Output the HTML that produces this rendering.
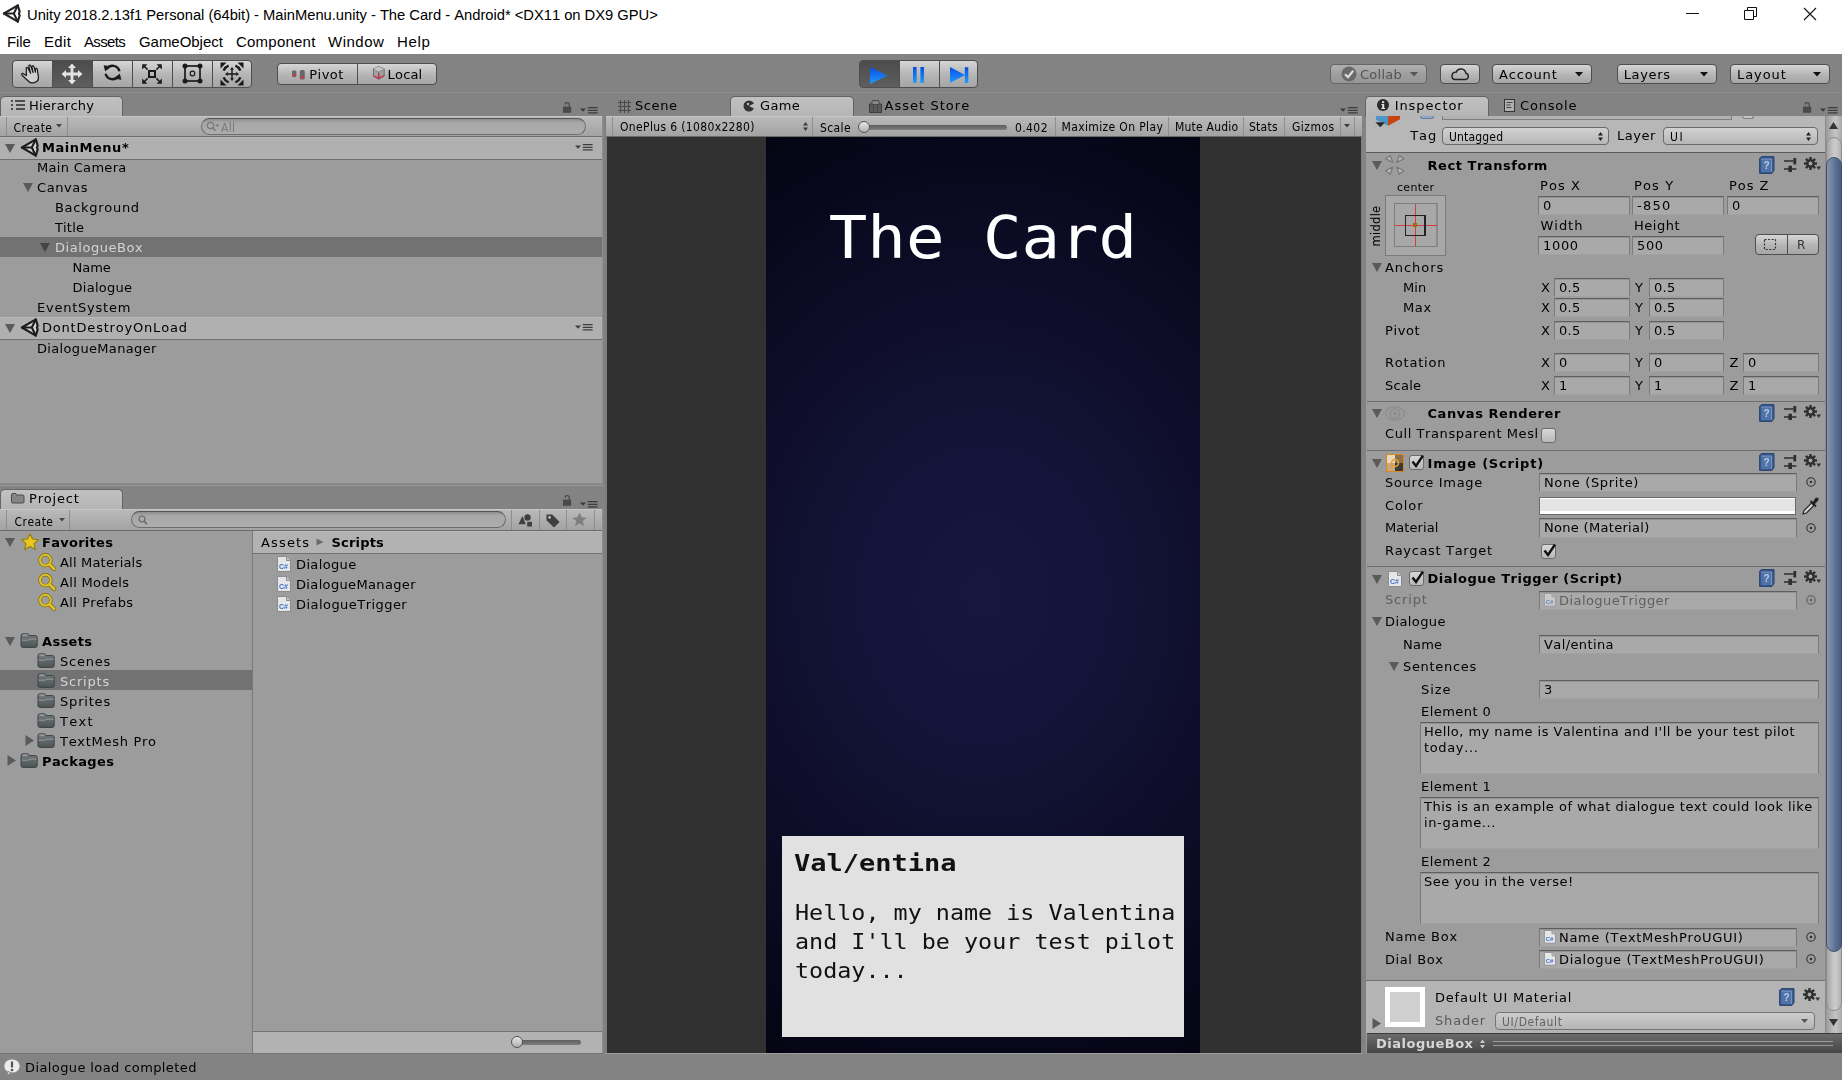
<!DOCTYPE html>
<html><head><meta charset="utf-8"><title>Unity</title>
<style>
*{box-sizing:border-box;margin:0;padding:0}
html,body{width:1842px;height:1080px;overflow:hidden;background:#838383}
body{font-family:"DejaVu Sans","Liberation Sans",sans-serif;font-size:13px;letter-spacing:.28px;font-kerning:none;color:#000;position:relative}
.a{position:absolute}
.t{position:absolute;white-space:nowrap;line-height:20px;height:20px}
.b{font-weight:bold}
.w{font-family:"Liberation Sans",sans-serif;letter-spacing:0}
.btn{position:absolute;border:1px solid #4e4e4e;background:linear-gradient(#d6d6d6,#b4b4b4 55%,#a6a6a6);}
.btn.on{background:linear-gradient(#4c4c4c,#5e5e5e);}
.tab{position:absolute;height:21.5px;border:1px solid #646464;border-bottom:none;border-radius:5px 5px 0 0;background:linear-gradient(#c1c1c1,#b4b4b4)}
.pbar{position:absolute;background:linear-gradient(#bababa,#a3a3a3);border-bottom:1px solid #6c6c6c;box-shadow:inset 0 1px 0 #c6c6c6}
.panel{position:absolute;background:#9c9c9c}
.f{position:absolute;background:#a9a9a9;border:1px solid #7a7a7a;border-top-color:#5e5e5e;border-bottom-color:#a2a2a2;box-shadow:inset 0 1px 0 #939393;line-height:17px;font-size:13px;padding-left:4px;white-space:nowrap;overflow:hidden}
.sep{position:absolute;height:1px;background:#6e6e6e}
.g{color:#4a4a4a}
.s12{font-size:12px;font-family:"DejaVu Sans Condensed","DejaVu Sans",sans-serif}
.mono{font-family:"DejaVu Sans Mono","Liberation Mono",monospace;letter-spacing:0}
.dd{position:absolute;border:1px solid #6a6a6a;border-radius:4px;background:linear-gradient(#d2d2d2,#b6b6b6);font-size:12px;font-family:"DejaVu Sans Condensed","DejaVu Sans",sans-serif;line-height:17px;padding:1px 0 0 6px;white-space:nowrap}
svg{position:absolute;overflow:visible}
</style></head>
<body>
<div class="a" style="left:0px;top:0px;width:1842px;height:54px;background:#fff"></div>
<svg style="left:0px;top:0px;" width="24" height="26" viewBox="0 0 24 26"><g fill="none" stroke="#222" stroke-width="2.1" stroke-linejoin="round" stroke-linecap="round"><path d="M3.9 13.5 L17.8 5.4 L19.7 11.6 L18.9 13.5 L19.7 15.4 L17.8 21.6 Z" fill="none"/><path d="M13.8 13.5 L3.9 13.5 M13.8 13.5 L17.8 5.4 M13.8 13.5 L17.8 21.6"/></g></svg>
<div class="t w" style="left:27px;top:4.6px;font-size:14.75px;letter-spacing:-0.024px;">Unity 2018.2.13f1 Personal (64bit) - MainMenu.unity - The Card - Android* &lt;DX11 on DX9 GPU&gt;</div>
<svg style="left:1686px;top:13px;" width="13" height="1" viewBox="0 0 13 1"><rect width="13" height="1" fill="#111"/></svg>
<svg style="left:1744px;top:7px;" width="14" height="14" viewBox="0 0 14 14"><path d="M0.5 3.5H9.5V12.5H0.5Z M3.5 3.5V0.5H12.5V9.5H9.5" fill="none" stroke="#111" stroke-width="1"/></svg>
<svg style="left:1804px;top:8px;" width="12" height="12" viewBox="0 0 12 12"><path d="M0 0L12 12M12 0L0 12" stroke="#111" stroke-width="1.1"/></svg>
<div class="t w" style="left:7px;top:31.6px;font-size:15px;letter-spacing:-0.123px;">File</div>
<div class="t w" style="left:44px;top:31.6px;font-size:15px;letter-spacing:0.318px;">Edit</div>
<div class="t w" style="left:84px;top:31.6px;font-size:15px;letter-spacing:-0.643px;">Assets</div>
<div class="t w" style="left:139px;top:31.6px;font-size:15px;letter-spacing:-0.044px;">GameObject</div>
<div class="t w" style="left:236px;top:31.6px;font-size:15px;letter-spacing:0.219px;">Component</div>
<div class="t w" style="left:328px;top:31.6px;font-size:15px;letter-spacing:0.490px;">Window</div>
<div class="t w" style="left:397px;top:31.6px;font-size:15px;letter-spacing:0.650px;">Help</div>
<div class="a" style="left:0;top:0;width:1842px;height:1080px;will-change:transform">
<div class="a" style="left:0px;top:54px;width:1842px;height:39px;background:#838383"></div>
<div class="a" style="left:0px;top:92px;width:1842px;height:1px;background:#8e8e8e"></div>
<div class="btn" style="left:12px;top:60px;width:41px;height:28px;border-radius:4px 0 0 4px"></div>
<div class="btn on" style="left:52px;top:60px;width:41px;height:28px;border-radius:0"></div>
<div class="btn" style="left:92px;top:60px;width:41px;height:28px;border-radius:0"></div>
<div class="btn" style="left:132px;top:60px;width:41px;height:28px;border-radius:0"></div>
<div class="btn" style="left:172px;top:60px;width:41px;height:28px;border-radius:0"></div>
<div class="btn" style="left:212px;top:60px;width:40px;height:28px;border-radius:0 4px 4px 0"></div>
<svg style="left:20px;top:63px;" width="22" height="22" viewBox="0 0 22 22"><g transform="rotate(-14 11 11)"><path d="M6.2 11.4 L3.6 8.8 C2.4 7.8 1.2 9.2 2.2 10.4 L6.8 17.4 C8 19.4 9.6 20.2 12 20.2 C15.6 20.2 17.4 18 17.6 14.8 L18.2 7.8 C18.2 6.4 16.4 6.4 16.2 7.8 L15.8 10.4 L15.6 4.6 C15.5 3.2 13.7 3.2 13.6 4.6 L13.4 10 L12.7 3 C12.5 1.6 10.7 1.8 10.7 3.2 L10.8 10.2 L9.4 4.4 C9 3.1 7.3 3.6 7.6 5 Z" fill="#cfcfcf" stroke="#1a1a1a" stroke-width="1.2" stroke-linejoin="round"/></g></svg>
<svg style="left:61px;top:62.5px;" width="22" height="22" viewBox="0 0 22 22"><path d="M11 0.5 L15 5 H12.4 V9.6 H17 V7 L21.5 11 L17 15 V12.4 H12.4 V17 H15 L11 21.5 L7 17 H9.6 V12.4 H5 V15 L0.5 11 L5 7 V9.6 H9.6 V5 H7 Z" fill="#e4e4e4"/></svg>
<svg style="left:103px;top:63px;" width="19" height="19" viewBox="0 0 19 19"><g fill="none" stroke="#1a1a1a" stroke-width="2.4"><path d="M3.6 6.2 A7 7 0 0 1 16.4 8.2"/><path d="M15.4 12.8 A7 7 0 0 1 2.6 10.8"/></g><path d="M0.6 2.2 L7.4 3.2 L2.2 8.6 Z M18.4 16.8 L11.6 15.8 L16.8 10.4 Z" fill="#1a1a1a"/></svg>
<svg style="left:142px;top:64px;" width="20" height="20" viewBox="0 0 20 20"><rect x="7" y="7" width="6" height="6" fill="none" stroke="#1a1a1a" stroke-width="2"/><g stroke="#1a1a1a" stroke-width="1.5"><path d="M5.6 5.6L2 2M14.4 5.6L18 2M5.6 14.4L2 18M14.4 14.4L18 18"/></g><path d="M0.2 0.2H5.4L0.2 5.4Z M19.8 0.2H14.6L19.8 5.4Z M0.2 19.8H5.4L0.2 14.6Z M19.8 19.8H14.6L19.8 14.6Z" fill="#1a1a1a"/></svg>
<svg style="left:181.5px;top:63px;" width="21" height="21" viewBox="0 0 21 21"><rect x="3" y="3" width="15" height="15" fill="none" stroke="#1a1a1a" stroke-width="1.7"/><circle cx="10.5" cy="10.5" r="2.3" fill="none" stroke="#1a1a1a" stroke-width="1.2"/><g fill="#1a1a1a"><circle cx="3" cy="3" r="2.5"/><circle cx="18" cy="3" r="2.5"/><circle cx="3" cy="18" r="2.5"/><circle cx="18" cy="18" r="2.5"/></g></svg>
<svg style="left:220px;top:62px;" width="24" height="24" viewBox="0 0 24 24"><g fill="none" stroke="#1a1a1a" stroke-width="2.4"><path d="M3.6 8.6A9 9 0 0 1 8.6 3.6M15.4 3.6A9 9 0 0 1 20.4 8.6M20.4 15.4A9 9 0 0 1 15.4 20.4M8.6 20.4A9 9 0 0 1 3.6 15.4"/></g><g stroke="#1a1a1a" stroke-width="1.4"><path d="M12 7V17M7 12H17"/></g><path d="M0.5 0.5H6.5L0.5 6.5Z M23.5 0.5H17.5L23.5 6.5Z M0.5 23.5H6.5L0.5 17.5Z M23.5 23.5H17.5L23.5 17.5Z" fill="#1a1a1a"/><path d="M12 5L14 7.8H10Z M12 19L14 16.2H10Z M5 12L7.8 10V14Z M19 12L16.2 10V14Z" fill="#1a1a1a"/></svg>
<div class="btn" style="left:277px;top:63px;width:81px;height:22px;border-radius:4px 0 0 4px"></div>
<div class="btn" style="left:357px;top:63px;width:80px;height:22px;border-radius:0 4px 4px 0"></div>
<svg style="left:292px;top:69.5px;" width="13" height="10" viewBox="0 0 13 10"><rect x="0" y="0.6" width="4.4" height="6.6" rx="1.4" fill="#676767"/><rect x="7.8" y="0" width="5" height="9.6" rx="1.6" fill="#676767"/><circle cx="2.2" cy="5.4" r="1.3" fill="#d8364a"/><circle cx="10.3" cy="7.4" r="1.5" fill="#d8364a"/></svg>
<div class="t " style="left:309.3px;top:64.6px;letter-spacing:0.476px;">Pivot</div>
<svg style="left:373px;top:65.8px;" width="12" height="14" viewBox="0 0 12 14"><path d="M5.7 0.4L11.2 3V10.2L5.7 13.2L0.4 10.2V3Z" fill="#a2a2a2" stroke="#6a6a6a" stroke-width="0.9"/><path d="M0.4 3L5.7 5.8L11.2 3M5.7 5.8V13.2" fill="none" stroke="#6a6a6a" stroke-width="0.9"/><path d="M5.7 0.4L11.2 3L5.7 5.8L0.4 3Z" fill="#c4c4c4"/><path d="M0.6 9L5.7 11.4L11 9V10.2L5.7 13.2L0.6 10.2Z" fill="#c4364a"/><path d="M5 7H6.4V12H5Z" fill="#c4364a"/></svg>
<div class="t " style="left:387.6px;top:64.6px;letter-spacing:0.170px;">Local</div>
<div class="btn on" style="left:859px;top:60px;width:41px;height:28px;border-radius:4px 0 0 4px"></div>
<div class="btn" style="left:899px;top:60px;width:41px;height:28px;"></div>
<div class="btn" style="left:939px;top:60px;width:39px;height:28px;border-radius:0 4px 4px 0"></div>
<svg width="0" height="0" style="left:0;top:0"><defs><linearGradient id="bl" x1="0" y1="0" x2="0" y2="1"><stop offset="0" stop-color="#0a4ee0"/><stop offset="1" stop-color="#1f9bff"/></linearGradient></defs></svg>
<svg style="left:869.8px;top:66.5px;" width="18" height="17" viewBox="0 0 18 17"><path d="M0 0V17L17.6 8.6Z" fill="url(#bl)"/></svg>
<svg style="left:913.4px;top:67.2px;" width="11" height="16" viewBox="0 0 11 16"><rect x="0" y="0" width="3.6" height="15.8" fill="url(#bl)"/><rect x="7.4" y="0" width="3.6" height="15.8" fill="url(#bl)"/></svg>
<svg style="left:950px;top:67px;" width="19" height="16" viewBox="0 0 19 16"><path d="M0 0V16L15 8Z" fill="url(#bl)"/><rect x="14.8" y="0.2" width="3.5" height="15.8" fill="url(#bl)"/></svg>
<div class="btn" style="left:1330px;top:64px;width:97px;height:20px;border-radius:4px;opacity:.55;"></div>
<div class="t " style="left:1360px;top:64.6px;color:#555;letter-spacing:0.265px;">Collab</div>
<svg style="left:1410px;top:72px;" width="8" height="5" viewBox="0 0 8 5"><path d="M0 0H8L4 4.5Z" fill="#555"/></svg>
<svg style="left:1341px;top:66px;" width="16" height="16" viewBox="0 0 16 16"><circle cx="8" cy="8" r="7.5" fill="#6a6a6a"/><path d="M4 8.2L7 11.2L12.2 4.8" fill="none" stroke="#ddd" stroke-width="2.2"/></svg>
<div class="btn" style="left:1440px;top:64px;width:40px;height:20px;border-radius:4px;"></div>
<svg style="left:1450px;top:67px;" width="20" height="14" viewBox="0 0 20 14"><path d="M5 12.5H15.5A3.2 3.2 0 0 0 15.8 6.2A5 5 0 0 0 6.2 5.2A3.7 3.7 0 0 0 5 12.5Z" fill="none" stroke="#222" stroke-width="1.4"/></svg>
<div class="btn" style="left:1492px;top:64px;width:100px;height:20px;border-radius:4px;"></div>
<div class="t " style="left:1499px;top:64.6px;letter-spacing:0.847px;">Account</div>
<svg style="left:1575px;top:72px;" width="8" height="5" viewBox="0 0 8 5"><path d="M0 0H8L4 4.5Z" fill="#111"/></svg>
<div class="btn" style="left:1617px;top:64px;width:100px;height:20px;border-radius:4px;"></div>
<div class="t " style="left:1623.7px;top:64.6px;letter-spacing:0.676px;">Layers</div>
<svg style="left:1700px;top:72px;" width="8" height="5" viewBox="0 0 8 5"><path d="M0 0H8L4 4.5Z" fill="#111"/></svg>
<div class="btn" style="left:1730px;top:64px;width:100px;height:20px;border-radius:4px;"></div>
<div class="t " style="left:1737px;top:64.6px;letter-spacing:0.922px;">Layout</div>
<svg style="left:1813px;top:72px;" width="8" height="5" viewBox="0 0 8 5"><path d="M0 0H8L4 4.5Z" fill="#111"/></svg>
<div class="tab" style="left:0;top:95.5px;width:123px"></div>
<svg style="left:11px;top:100px;" width="15" height="11" viewBox="0 0 15 11"><path d="M0 1H2M0 5H2M0 9H2M4 1H14M5 5H14M5 9H14" stroke="#2a2a2a" stroke-width="1.6"/></svg>
<div class="t " style="left:29px;top:96.2px;letter-spacing:0.235px;">Hierarchy</div>
<svg style="left:563px;top:102px;" width="10" height="11" viewBox="0 0 10 11"><path d="M6.2 5V3A2.1 2.1 0 0 0 2 2.6" fill="none" stroke="#4a4a4a" stroke-width="1.2"/><rect x="0" y="4.6" width="8.2" height="6.2" fill="#4a4a4a"/></svg>
<svg style="left:580.3px;top:107.4px;" width="18" height="8" viewBox="0 0 18 8"><path d="M0 1.4H6L3 4.8Z" fill="#3c3c3c"/><path d="M7.8 0.7H17.6M7.8 3.3H17.6M7.8 5.9H17.6" stroke="#3c3c3c" stroke-width="1.3"/></svg>
<div class="panel" style="left:0px;top:116px;width:603px;height:368px;border-right:1px solid #8e8e8e;border-bottom:1px solid #8e8e8e"></div>
<div class="a" style="left:0px;top:485px;width:604px;height:1px;background:#999"></div>
<div class="pbar" style="left:0px;top:116px;width:602px;height:21px;"></div>
<div class="a" style="left:6px;top:117px;width:1px;height:19px;background:#8e8e8e"></div>
<div class="a" style="left:67px;top:117px;width:1px;height:19px;background:#8e8e8e"></div>
<div class="t s12" style="left:13.5px;top:117.6px;letter-spacing:0.478px;">Create</div>
<svg style="left:56.4px;top:123.6px;" width="6" height="3.4" viewBox="0 0 6 3.4"><path d="M0 0H6L3 3.4Z" fill="#444"/></svg>
<div class="a" style="left:201px;top:117.5px;width:385px;height:17px;border:1px solid #6e6e6e;border-top-color:#555;border-radius:8.5px;background:linear-gradient(#8e8e8e,#a8a8a8 25%,#adadad);"></div>
<svg style="left:206px;top:121px;" width="14" height="11" viewBox="0 0 14 11"><circle cx="4.5" cy="4.5" r="3.2" fill="none" stroke="#777" stroke-width="1.2"/><path d="M6.8 6.8L9.5 9.8" stroke="#777" stroke-width="1.4"/><path d="M9 3.5H13.5L11.2 6Z" fill="#777"/></svg>
<div class="t s12" style="left:221px;top:118.1px;color:#7a7a7a">All</div>
<div class="a" style="left:0px;top:137px;width:602px;height:23px;background:#b0b0b0;border-bottom:1px solid #707070;border-top:1px solid #b8b8b8"></div>
<svg style="left:5px;top:143.5px;" width="10" height="9" viewBox="0 0 10 9"><path d="M0 0H10L5 9Z" fill="#5a5a5a"/></svg>
<svg style="left:18.4px;top:134.4px;" width="24" height="26" viewBox="0 0 24 26"><g fill="none" stroke="#1c1c1c" stroke-width="2.1" stroke-linejoin="round" stroke-linecap="round"><path d="M3.9 13.5 L17.8 5.4 L19.7 11.6 L18.9 13.5 L19.7 15.4 L17.8 21.6 Z" fill="#d2d2d2"/><path d="M13.8 13.5 L3.9 13.5 M13.8 13.5 L17.8 5.4 M13.8 13.5 L17.8 21.6"/></g></svg>
<div class="t b" style="left:42px;top:138.1px;letter-spacing:0.527px;">MainMenu*</div>
<svg style="left:575px;top:144px;" width="18" height="8" viewBox="0 0 18 8"><path d="M0 1.4H6L3 4.8Z" fill="#3c3c3c"/><path d="M7.8 0.7H17.6M7.8 3.3H17.6M7.8 5.9H17.6" stroke="#3c3c3c" stroke-width="1.3"/></svg>
<div class="t " style="left:37px;top:158.1px;letter-spacing:0.312px;">Main Camera</div>
<svg style="left:23px;top:183.0px;" width="10" height="9" viewBox="0 0 10 9"><path d="M0 0H10L5 9Z" fill="#5a5a5a"/></svg>
<div class="t " style="left:37px;top:178.1px;letter-spacing:0.577px;">Canvas</div>
<div class="t " style="left:55px;top:198.1px;letter-spacing:0.695px;">Background</div>
<div class="t " style="left:55px;top:218.1px;letter-spacing:0.160px;">Title</div>
<div class="a" style="left:0px;top:237px;width:602px;height:20px;background:#727272"></div>
<svg style="left:40px;top:243.0px;" width="10" height="9" viewBox="0 0 10 9"><path d="M0 0H10L5 9Z" fill="#444"/></svg>
<div class="t " style="left:55px;top:238.1px;color:#d4d4d4;letter-spacing:0.559px;">DialogueBox</div>
<div class="t " style="left:72.5px;top:258.1px;letter-spacing:-0.018px;">Name</div>
<div class="t " style="left:72.5px;top:278.1px;letter-spacing:0.280px;">Dialogue</div>
<div class="t " style="left:37px;top:298.1px;letter-spacing:0.768px;">EventSystem</div>
<div class="a" style="left:0px;top:317px;width:602px;height:23px;background:#b0b0b0;border-bottom:1px solid #707070;border-top:1px solid #b8b8b8"></div>
<svg style="left:5px;top:323.5px;" width="10" height="9" viewBox="0 0 10 9"><path d="M0 0H10L5 9Z" fill="#5a5a5a"/></svg>
<svg style="left:18.4px;top:314.4px;" width="24" height="26" viewBox="0 0 24 26"><g fill="none" stroke="#1c1c1c" stroke-width="2.1" stroke-linejoin="round" stroke-linecap="round"><path d="M3.9 13.5 L17.8 5.4 L19.7 11.6 L18.9 13.5 L19.7 15.4 L17.8 21.6 Z" fill="#d2d2d2"/><path d="M13.8 13.5 L3.9 13.5 M13.8 13.5 L17.8 5.4 M13.8 13.5 L17.8 21.6"/></g></svg>
<div class="t " style="left:42px;top:318.1px;letter-spacing:0.803px;">DontDestroyOnLoad</div>
<svg style="left:575px;top:324px;" width="18" height="8" viewBox="0 0 18 8"><path d="M0 1.4H6L3 4.8Z" fill="#3c3c3c"/><path d="M7.8 0.7H17.6M7.8 3.3H17.6M7.8 5.9H17.6" stroke="#3c3c3c" stroke-width="1.3"/></svg>
<div class="t " style="left:37px;top:338.6px;letter-spacing:0.334px;">DialogueManager</div>
<div class="tab" style="left:0;top:488.5px;width:123px"></div>
<svg width="0" height="0" style="left:0;top:0"><defs><linearGradient id="fg" x1="0" y1="0" x2="0" y2="1"><stop offset="0" stop-color="#767c7e"/><stop offset="1" stop-color="#4b5355"/></linearGradient><linearGradient id="ft" x1="0" y1="0" x2="0" y2="1"><stop offset="0" stop-color="#b0b0b0"/><stop offset="1" stop-color="#7c8082"/></linearGradient></defs></svg>
<svg style="left:10.5px;top:493px;" width="14" height="11" viewBox="0 0 14 11"><path d="M0.5 1.8Q0.5 0.5 1.8 0.5H4.6L5.8 2H11.6Q13 2 13 3.3V8.8Q13 10 11.7 10H1.8Q0.5 10 0.5 8.8Z" fill="#858585" stroke="#4a4a4a"/></svg>
<div class="t " style="left:29px;top:489.2px;letter-spacing:0.818px;">Project</div>
<svg style="left:563px;top:495.4px;" width="10" height="11" viewBox="0 0 10 11"><path d="M6.2 5V3A2.1 2.1 0 0 0 2 2.6" fill="none" stroke="#4a4a4a" stroke-width="1.2"/><rect x="0" y="4.6" width="8.2" height="6.2" fill="#4a4a4a"/></svg>
<svg style="left:580.3px;top:500.79999999999995px;" width="18" height="8" viewBox="0 0 18 8"><path d="M0 1.4H6L3 4.8Z" fill="#3c3c3c"/><path d="M7.8 0.7H17.6M7.8 3.3H17.6M7.8 5.9H17.6" stroke="#3c3c3c" stroke-width="1.3"/></svg>
<div class="panel" style="left:0px;top:509px;width:603px;height:544px;border-right:1px solid #8e8e8e"></div>
<div class="pbar" style="left:0px;top:509px;width:602px;height:22px;"></div>
<div class="a" style="left:6px;top:510px;width:1px;height:20px;background:#8e8e8e"></div>
<div class="a" style="left:69px;top:510px;width:1px;height:20px;background:#8e8e8e"></div>
<div class="t s12" style="left:14.5px;top:511.6px;letter-spacing:0.478px;">Create</div>
<svg style="left:58.6px;top:517.6px;" width="6" height="3.4" viewBox="0 0 6 3.4"><path d="M0 0H6L3 3.4Z" fill="#444"/></svg>
<div class="a" style="left:131px;top:511.3px;width:375px;height:17px;border:1px solid #6e6e6e;border-top-color:#555;border-radius:8.5px;background:linear-gradient(#8e8e8e,#a8a8a8 25%,#adadad);"></div>
<svg style="left:138px;top:515px;" width="10" height="10" viewBox="0 0 10 10"><circle cx="4" cy="4" r="3" fill="none" stroke="#666" stroke-width="1.2"/><path d="M6.2 6.2L9 9.2" stroke="#666" stroke-width="1.5"/></svg>
<div class="a" style="left:511px;top:510px;width:1px;height:20px;background:#8e8e8e"></div>
<div class="a" style="left:539px;top:510px;width:1px;height:20px;background:#8e8e8e"></div>
<div class="a" style="left:566px;top:510px;width:1px;height:20px;background:#8e8e8e"></div>
<div class="a" style="left:594px;top:510px;width:1px;height:20px;background:#8e8e8e"></div>
<svg style="left:518px;top:513.5px;" width="15" height="13" viewBox="0 0 15 13"><circle cx="9.5" cy="3.5" r="3.2" fill="#404040"/><path d="M0.5 10.2L4.4 2L7.8 10.2Z" fill="#404040"/><rect x="9.2" y="7.8" width="4.8" height="4.8" fill="#404040"/></svg>
<svg style="left:545.5px;top:514px;" width="14" height="14" viewBox="0 0 14 14"><path d="M0.5 0.5H6.2L13.6 8L8 13.6L0.5 6.2Z" fill="#3e3e3e"/><circle cx="3.6" cy="3.4" r="1.3" fill="#c8c8c8"/></svg>
<svg style="left:572px;top:512px;" width="15" height="14" viewBox="0 0 15 14"><path d="M7.5 0.5L9.6 5.2L14.6 5.7L10.8 9.1L11.9 14L7.5 11.4L3.1 14L4.2 9.1L0.4 5.7L5.4 5.2Z" fill="#7e7e7e"/></svg>
<div class="a" style="left:252px;top:531px;width:1px;height:522px;background:#7a7a7a"></div>
<svg style="left:5px;top:537.5px;" width="10" height="9" viewBox="0 0 10 9"><path d="M0 0H10L5 9Z" fill="#5a5a5a"/></svg>
<svg style="left:21px;top:532.5px;" width="18" height="17" viewBox="0 0 18 17"><path d="M9 0.8L11.5 6L17.4 6.7L13 10.6L14.3 16.4L9 13.4L3.7 16.4L5 10.6L0.6 6.7L6.5 6Z" fill="#ebc622" stroke="#94800f" stroke-width="1.2" stroke-linejoin="round"/></svg>
<div class="t b" style="left:42px;top:532.6px;letter-spacing:0.276px;">Favorites</div>
<svg style="left:38px;top:552.6px;" width="18" height="18" viewBox="0 0 18 18"><circle cx="7.4" cy="7.2" r="5.4" fill="none" stroke="#7d6a12" stroke-width="3.4"/><path d="M11.6 11.4L16.2 16" stroke="#7d6a12" stroke-width="4.2" stroke-linecap="round"/><circle cx="7.4" cy="7.2" r="5.4" fill="none" stroke="#e2c326" stroke-width="2"/><path d="M11.8 11.6L16.2 16" stroke="#e2c326" stroke-width="2.6" stroke-linecap="round"/></svg>
<div class="t " style="left:60px;top:552.6px;letter-spacing:0.197px;">All Materials</div>
<svg style="left:38px;top:572.6px;" width="18" height="18" viewBox="0 0 18 18"><circle cx="7.4" cy="7.2" r="5.4" fill="none" stroke="#7d6a12" stroke-width="3.4"/><path d="M11.6 11.4L16.2 16" stroke="#7d6a12" stroke-width="4.2" stroke-linecap="round"/><circle cx="7.4" cy="7.2" r="5.4" fill="none" stroke="#e2c326" stroke-width="2"/><path d="M11.8 11.6L16.2 16" stroke="#e2c326" stroke-width="2.6" stroke-linecap="round"/></svg>
<div class="t " style="left:60px;top:572.6px;letter-spacing:0.327px;">All Models</div>
<svg style="left:38px;top:592.6px;" width="18" height="18" viewBox="0 0 18 18"><circle cx="7.4" cy="7.2" r="5.4" fill="none" stroke="#7d6a12" stroke-width="3.4"/><path d="M11.6 11.4L16.2 16" stroke="#7d6a12" stroke-width="4.2" stroke-linecap="round"/><circle cx="7.4" cy="7.2" r="5.4" fill="none" stroke="#e2c326" stroke-width="2"/><path d="M11.8 11.6L16.2 16" stroke="#e2c326" stroke-width="2.6" stroke-linecap="round"/></svg>
<div class="t " style="left:60px;top:592.6px;letter-spacing:0.410px;">All Prefabs</div>
<svg style="left:5px;top:636.5px;" width="10" height="9" viewBox="0 0 10 9"><path d="M0 0H10L5 9Z" fill="#5a5a5a"/></svg>
<svg style="left:20px;top:633px;" width="18" height="15" viewBox="0 0 18 15"><path d="M1 3Q1 0.8 3 0.8H7Q8.6 0.8 9 2.6H15.4Q17.2 2.6 17.2 4.4V12.6Q17.2 14.4 15.4 14.4H2.8Q1 14.4 1 12.6Z" fill="url(#fg)" stroke="#3d4345" stroke-width="1"/><path d="M2.2 2.8Q2.2 1.6 3.4 1.6H6.8Q7.8 1.6 8 3.2H2.2Z" fill="url(#ft)"/><path d="M1.6 7.2H8.2L9.2 6.2H16.6" fill="none" stroke="#9aa0a2" stroke-width="0.9"/></svg>
<div class="t b" style="left:42px;top:631.6px;letter-spacing:0.339px;">Assets</div>
<div class="t " style="left:60px;top:651.6px;letter-spacing:0.758px;">Scenes</div>
<svg style="left:36.8px;top:652.7px;" width="18" height="15" viewBox="0 0 18 15"><path d="M1 3Q1 0.8 3 0.8H7Q8.6 0.8 9 2.6H15.4Q17.2 2.6 17.2 4.4V12.6Q17.2 14.4 15.4 14.4H2.8Q1 14.4 1 12.6Z" fill="url(#fg)" stroke="#3d4345" stroke-width="1"/><path d="M2.2 2.8Q2.2 1.6 3.4 1.6H6.8Q7.8 1.6 8 3.2H2.2Z" fill="url(#ft)"/><path d="M1.6 7.2H8.2L9.2 6.2H16.6" fill="none" stroke="#9aa0a2" stroke-width="0.9"/></svg>
<div class="a" style="left:0px;top:670px;width:252px;height:20px;background:#727272"></div>
<div class="t " style="left:60px;top:671.6px;color:#d4d4d4;letter-spacing:0.787px;">Scripts</div>
<svg style="left:36.8px;top:672.7px;" width="18" height="15" viewBox="0 0 18 15"><path d="M1 3Q1 0.8 3 0.8H7Q8.6 0.8 9 2.6H15.4Q17.2 2.6 17.2 4.4V12.6Q17.2 14.4 15.4 14.4H2.8Q1 14.4 1 12.6Z" fill="url(#fg)" stroke="#3d4345" stroke-width="1"/><path d="M2.2 2.8Q2.2 1.6 3.4 1.6H6.8Q7.8 1.6 8 3.2H2.2Z" fill="url(#ft)"/><path d="M1.6 7.2H8.2L9.2 6.2H16.6" fill="none" stroke="#9aa0a2" stroke-width="0.9"/></svg>
<div class="t " style="left:60px;top:691.6px;letter-spacing:0.812px;">Sprites</div>
<svg style="left:36.8px;top:692.7px;" width="18" height="15" viewBox="0 0 18 15"><path d="M1 3Q1 0.8 3 0.8H7Q8.6 0.8 9 2.6H15.4Q17.2 2.6 17.2 4.4V12.6Q17.2 14.4 15.4 14.4H2.8Q1 14.4 1 12.6Z" fill="url(#fg)" stroke="#3d4345" stroke-width="1"/><path d="M2.2 2.8Q2.2 1.6 3.4 1.6H6.8Q7.8 1.6 8 3.2H2.2Z" fill="url(#ft)"/><path d="M1.6 7.2H8.2L9.2 6.2H16.6" fill="none" stroke="#9aa0a2" stroke-width="0.9"/></svg>
<div class="t " style="left:60px;top:711.6px;letter-spacing:1.323px;">Text</div>
<svg style="left:36.8px;top:712.7px;" width="18" height="15" viewBox="0 0 18 15"><path d="M1 3Q1 0.8 3 0.8H7Q8.6 0.8 9 2.6H15.4Q17.2 2.6 17.2 4.4V12.6Q17.2 14.4 15.4 14.4H2.8Q1 14.4 1 12.6Z" fill="url(#fg)" stroke="#3d4345" stroke-width="1"/><path d="M2.2 2.8Q2.2 1.6 3.4 1.6H6.8Q7.8 1.6 8 3.2H2.2Z" fill="url(#ft)"/><path d="M1.6 7.2H8.2L9.2 6.2H16.6" fill="none" stroke="#9aa0a2" stroke-width="0.9"/></svg>
<div class="t " style="left:60px;top:731.6px;letter-spacing:0.707px;">TextMesh Pro</div>
<svg style="left:36.8px;top:732.7px;" width="18" height="15" viewBox="0 0 18 15"><path d="M1 3Q1 0.8 3 0.8H7Q8.6 0.8 9 2.6H15.4Q17.2 2.6 17.2 4.4V12.6Q17.2 14.4 15.4 14.4H2.8Q1 14.4 1 12.6Z" fill="url(#fg)" stroke="#3d4345" stroke-width="1"/><path d="M2.2 2.8Q2.2 1.6 3.4 1.6H6.8Q7.8 1.6 8 3.2H2.2Z" fill="url(#ft)"/><path d="M1.6 7.2H8.2L9.2 6.2H16.6" fill="none" stroke="#9aa0a2" stroke-width="0.9"/></svg>
<svg style="left:25px;top:735px;" width="9" height="11" viewBox="0 0 9 11"><path d="M0.5 0V11L9 5.5Z" fill="#5a5a5a"/></svg>
<svg style="left:7px;top:755px;" width="9" height="11" viewBox="0 0 9 11"><path d="M0.5 0V11L9 5.5Z" fill="#5a5a5a"/></svg>
<svg style="left:20px;top:753px;" width="18" height="15" viewBox="0 0 18 15"><path d="M1 3Q1 0.8 3 0.8H7Q8.6 0.8 9 2.6H15.4Q17.2 2.6 17.2 4.4V12.6Q17.2 14.4 15.4 14.4H2.8Q1 14.4 1 12.6Z" fill="url(#fg)" stroke="#3d4345" stroke-width="1"/><path d="M2.2 2.8Q2.2 1.6 3.4 1.6H6.8Q7.8 1.6 8 3.2H2.2Z" fill="url(#ft)"/><path d="M1.6 7.2H8.2L9.2 6.2H16.6" fill="none" stroke="#9aa0a2" stroke-width="0.9"/></svg>
<div class="t b" style="left:42px;top:751.6px;letter-spacing:0.374px;">Packages</div>
<div class="a" style="left:253px;top:531px;width:349px;height:23px;background:#b2b2b2;border-bottom:1px solid #727272;border-top:1px solid #bababa"></div>
<div class="t " style="left:261px;top:532.6px;letter-spacing:1.159px;">Assets</div>
<svg style="left:316px;top:538px;" width="8" height="8" viewBox="0 0 8 8"><path d="M0.5 0.5V7.5L7.5 4Z" fill="#6a6a6a"/></svg>
<div class="t b" style="left:331.5px;top:532.6px;letter-spacing:0.184px;">Scripts</div>
<svg style="left:277px;top:556px;opacity:1" width="14.0" height="16.0" viewBox="0 0 14 16"><path d="M0.5 0.5H9.5L13.5 4.5V15.5H0.5Z" fill="#e4e6ea" stroke="#8c8c8c" stroke-width="1"/><path d="M9.5 0.5V4.5H13.5" fill="#c8c8c8" stroke="#8c8c8c" stroke-width="1"/><text x="2" y="12.5" font-family="Liberation Sans,sans-serif" font-weight="bold" font-size="7" letter-spacing="0" fill="#3b6fc4">C#</text></svg>
<div class="t " style="left:296px;top:554.6px;letter-spacing:0.365px;">Dialogue</div>
<svg style="left:277px;top:576px;opacity:1" width="14.0" height="16.0" viewBox="0 0 14 16"><path d="M0.5 0.5H9.5L13.5 4.5V15.5H0.5Z" fill="#e4e6ea" stroke="#8c8c8c" stroke-width="1"/><path d="M9.5 0.5V4.5H13.5" fill="#c8c8c8" stroke="#8c8c8c" stroke-width="1"/><text x="2" y="12.5" font-family="Liberation Sans,sans-serif" font-weight="bold" font-size="7" letter-spacing="0" fill="#3b6fc4">C#</text></svg>
<div class="t " style="left:296px;top:574.6px;letter-spacing:0.348px;">DialogueManager</div>
<svg style="left:277px;top:596px;opacity:1" width="14.0" height="16.0" viewBox="0 0 14 16"><path d="M0.5 0.5H9.5L13.5 4.5V15.5H0.5Z" fill="#e4e6ea" stroke="#8c8c8c" stroke-width="1"/><path d="M9.5 0.5V4.5H13.5" fill="#c8c8c8" stroke="#8c8c8c" stroke-width="1"/><text x="2" y="12.5" font-family="Liberation Sans,sans-serif" font-weight="bold" font-size="7" letter-spacing="0" fill="#3b6fc4">C#</text></svg>
<div class="t " style="left:296px;top:594.6px;letter-spacing:0.451px;">DialogueTrigger</div>
<div class="a" style="left:253px;top:1031px;width:349px;height:22px;background:#b2b2b2;border-top:1px solid #727272"></div>
<div class="a" style="left:518px;top:1039.5px;width:63px;height:5px;background:linear-gradient(#5e5e5e,#7e7e7e);border-radius:2.5px"></div>
<div class="a" style="left:511px;top:1036px;width:12px;height:12px;border-radius:6px;border:1px solid #555;background:linear-gradient(#e6e6e6,#b0b0b0)"></div>
<div class="a" style="left:605px;top:1053px;width:758px;height:1px;background:#9c9c9c"></div>
<div class="a" style="left:0px;top:1053px;width:604px;height:1px;background:#777"></div>
<svg style="left:3px;top:1058px;" width="18" height="18" viewBox="0 0 18 18"><ellipse cx="9" cy="8" rx="8.3" ry="7.3" fill="#ececec" stroke="#8a8a8a" stroke-width="1.4"/><path d="M5 13.5L4.2 17L8.5 14.8Z" fill="#ececec" stroke="#8a8a8a" stroke-width="1"/><path d="M9 3.5V9.5" stroke="#555" stroke-width="2.2"/><circle cx="9" cy="12" r="1.3" fill="#555"/></svg>
<div class="t " style="left:25px;top:1058.1px;letter-spacing:0.397px;">Dialogue load completed</div>
<svg style="left:617.5px;top:99.5px;" width="13" height="13" viewBox="0 0 13 13"><path d="M2.5 0V13M6.5 0V13M10.5 0V13M0 2.5H13M0 6.5H13M0 10.5H13" stroke="#4a4a4a" stroke-width="1.1"/></svg>
<div class="t " style="left:635px;top:96.2px;letter-spacing:0.591px;">Scene</div>
<div class="tab" style="left:730px;top:95.5px;width:124px"></div>
<svg style="left:743px;top:100px;" width="12" height="12" viewBox="0 0 12 12"><circle cx="6" cy="6" r="5.5" fill="#333"/><path d="M6 6L12 3V9Z" fill="#bdbdbd"/><circle cx="5" cy="4" r="1.2" fill="#bdbdbd"/></svg>
<div class="t " style="left:760px;top:96.2px;letter-spacing:0.366px;">Game</div>
<svg style="left:868.5px;top:99.5px;" width="13" height="13" viewBox="0 0 13 13"><path d="M0.5 4H12.5V12.5H0.5Z" fill="#5a5a5a" stroke="#3c3c3c"/><path d="M3 4V1.6Q3 0.6 4 0.6H9Q10 0.6 10 1.6V4" fill="#8a8a8a" stroke="#444" stroke-width="1"/><path d="M4.5 4V12M8.5 4V12" stroke="#444" stroke-width="0.8"/></svg>
<div class="t " style="left:884.5px;top:96.2px;letter-spacing:1.039px;">Asset Store</div>
<svg style="left:1340.4px;top:106.8px;" width="18" height="8" viewBox="0 0 18 8"><path d="M0 1.4H6L3 4.8Z" fill="#3c3c3c"/><path d="M7.8 0.7H17.6M7.8 3.3H17.6M7.8 5.9H17.6" stroke="#3c3c3c" stroke-width="1.3"/></svg>
<div class="a" style="left:605px;top:116px;width:757px;height:937px;background:#313131;border-left:2px solid #7e7e7e;border-right:1px solid #7e7e7e"></div>
<div class="pbar" style="left:606px;top:116px;width:756px;height:21px;"></div>
<div class="a" style="left:612px;top:117px;width:1px;height:19px;background:#8e8e8e"></div>
<div class="a" style="left:812px;top:117px;width:1px;height:19px;background:#8e8e8e"></div>
<div class="t s12" style="left:620px;top:117.1px;letter-spacing:0.353px;">OnePlus 6 (1080x2280)</div>
<svg style="left:802.5px;top:122px;" width="5" height="9" viewBox="0 0 5 9"><path d="M0 3.6H5L2.5 0Z M0 5.4H5L2.5 9Z" fill="#3a3a3a"/></svg>
<div class="t s12" style="left:820px;top:117.6px;letter-spacing:0.387px;">Scale</div>
<div class="a" style="left:864px;top:124.5px;width:143px;height:5px;background:linear-gradient(#5e5e5e,#7e7e7e);border-radius:2.5px"></div>
<div class="a" style="left:858px;top:121px;width:12px;height:12px;border-radius:6px;border:1px solid #555;background:linear-gradient(#e6e6e6,#b0b0b0)"></div>
<div class="t s12" style="left:1015px;top:117.6px;letter-spacing:0.401px;">0.402</div>
<div class="a" style="left:1055px;top:117px;width:1px;height:19px;background:#8e8e8e"></div>
<div class="a" style="left:1168px;top:117px;width:1px;height:19px;background:#8e8e8e"></div>
<div class="a" style="left:1243px;top:117px;width:1px;height:19px;background:#8e8e8e"></div>
<div class="a" style="left:1284px;top:117px;width:1px;height:19px;background:#8e8e8e"></div>
<div class="a" style="left:1340px;top:117px;width:1px;height:19px;background:#8e8e8e"></div>
<div class="a" style="left:1354px;top:117px;width:1px;height:19px;background:#8e8e8e"></div>
<div class="t s12" style="left:1061.5px;top:117.1px;letter-spacing:0.363px;">Maximize On Play</div>
<div class="t s12" style="left:1175px;top:117.1px;letter-spacing:0.217px;">Mute Audio</div>
<div class="t s12" style="left:1249px;top:117.1px;letter-spacing:0.236px;">Stats</div>
<div class="t s12" style="left:1292px;top:117.1px;letter-spacing:0.484px;">Gizmos</div>
<svg style="left:1344.2px;top:123.8px;" width="6" height="3.5" viewBox="0 0 6 3.5"><path d="M0 0H6L3 3.5Z" fill="#3c3c3c"/></svg>
<div class="a" style="left:766px;top:137px;width:434px;height:916px;background:radial-gradient(ellipse 480px 570px at 50% 50%, #16163f 0%, #14143a 25%, #10102f 42%, #0c0c26 60%, #07071a 80%, #03030e 100%)"></div>
<div class="a mono" style="left:766px;top:198.5px;width:434px;text-align:center;color:#fff;font-size:59px;line-height:78px;white-space:nowrap;transform:scaleX(1.085)">The Card</div>
<div class="a" style="left:782px;top:836px;width:402px;height:201px;background:#e1e1e1"></div>
<div class="a b mono" style="left:794px;top:848px;font-size:23.4px;line-height:30px;color:#111;white-space:nowrap;letter-spacing:0;transform-origin:0 50%;transform:scaleX(1.153)">Val/entina</div>
<div class="a mono" style="left:795px;top:898px;font-size:21.4px;line-height:29px;color:#111;white-space:pre;transform-origin:0 0;transform:scaleX(1.0935)">Hello, my name is Valentina
and I'll be your test pilot
today...</div>
<div class="tab" style="left:1365px;top:95.5px;width:124px"></div>
<svg style="left:1377.4px;top:98.8px;" width="12" height="12" viewBox="0 0 12 12"><circle cx="6" cy="6" r="6" fill="#2a2a2a"/><path d="M4.4 5H7.2V9H8.2V10H4.2V9H5.2V6H4.4Z" fill="#e4e4e4"/><rect x="5" y="2.2" width="2.2" height="1.9" fill="#e4e4e4"/></svg>
<div class="t " style="left:1394.7px;top:96.2px;letter-spacing:0.908px;">Inspector</div>
<svg style="left:1504px;top:99px;" width="11" height="13" viewBox="0 0 11 13"><rect x="0.5" y="0.5" width="10" height="12" fill="#b0b0b0" stroke="#333"/><path d="M2.5 3.5H8.5M2.5 6H6.5M2.5 8.5H7.5" stroke="#444"/></svg>
<div class="t " style="left:1520px;top:96.2px;letter-spacing:0.816px;">Console</div>
<svg style="left:1803px;top:102px;" width="10" height="11" viewBox="0 0 10 11"><path d="M6.2 5V3A2.1 2.1 0 0 0 2 2.6" fill="none" stroke="#4a4a4a" stroke-width="1.2"/><rect x="0" y="4.6" width="8.2" height="6.2" fill="#4a4a4a"/></svg>
<svg style="left:1820.3px;top:107.4px;" width="18" height="8" viewBox="0 0 18 8"><path d="M0 1.4H6L3 4.8Z" fill="#3c3c3c"/><path d="M7.8 0.7H17.6M7.8 3.3H17.6M7.8 5.9H17.6" stroke="#3c3c3c" stroke-width="1.3"/></svg>
<div class="panel" style="left:1366px;top:116px;width:476px;height:937px;"></div>
<div class="a" style="left:1366px;top:116px;width:460px;height:37px;background:#b7b7b7;border-bottom:1px solid #5c5c5c"></div>
<svg style="left:1375px;top:116px;" width="26" height="12" viewBox="0 0 26 12"><path d="M1 0H13V9.6L11.4 9L8 7L1 4Z" fill="#4d97c6"/><path d="M13 0H25V3.2L13.6 9.6L13 9.4Z" fill="#c8440f"/><path d="M0.4 6.2H10L5.4 11.2Z" fill="#2a2a2a"/></svg>
<div class="a" style="left:1420px;top:116px;width:14px;height:3px;background:#8fa8c8;border:1px solid #6a7f9a;border-top:none;border-radius:0 0 3px 3px"></div>
<div class="a" style="left:1442px;top:116px;width:290px;height:4px;background:#b1b1b1;border:1px solid #7e7e7e;border-top:none"></div>
<div class="a" style="left:1742px;top:116px;width:12px;height:3px;border:1px solid #7e7e7e;border-top:none;border-radius:0 0 3px 3px;background:#c4c4c4"></div>
<div class="t " style="left:1410.3px;top:125.6px;letter-spacing:0.870px;">Tag</div>
<div class="dd" style="left:1442px;top:127px;width:167px;height:18px;letter-spacing:0.171px;">Untagged</div>
<svg style="left:1597.5px;top:131.5px;" width="5" height="9" viewBox="0 0 5 9"><path d="M0 3.6H5L2.5 0Z M0 5.4H5L2.5 9Z" fill="#222"/></svg>
<div class="t " style="left:1617px;top:125.6px;letter-spacing:0.539px;">Layer</div>
<div class="dd" style="left:1663px;top:127px;width:155px;height:18px;letter-spacing:1.714px;">UI</div>
<svg style="left:1805.8px;top:131.5px;" width="5" height="9" viewBox="0 0 5 9"><path d="M0 3.6H5L2.5 0Z M0 5.4H5L2.5 9Z" fill="#222"/></svg>
<svg style="left:1372px;top:161.0px;" width="10" height="9" viewBox="0 0 10 9"><path d="M0 0H10L5 9Z" fill="#5a5a5a"/></svg>
<svg style="left:1385px;top:155px;" width="20" height="20" viewBox="0 0 20 20"><g fill="#b6b6b6" stroke="#757575" stroke-width="1.1" stroke-linejoin="round"><path d="M0.6 3.8L5.2 0.5L7.8 7.6Z"/><path d="M18.9 3.8L14.3 0.5L11.7 7.6Z"/><path d="M0.6 15.8L5.2 19.3L7.8 12Z"/><path d="M18.9 15.8L14.3 19.3L11.7 12Z"/></g></svg>
<div class="t b" style="left:1427.5px;top:156.1px;letter-spacing:0.541px;">Rect Transform</div>
<svg style="left:1758.6px;top:156px;" width="16" height="18" viewBox="0 0 16 18"><path d="M0.6 2.2L2.6 0.6H15V14.6L13 17.4H0.6Z" fill="#38588c" stroke="#2a4470" stroke-width="1"/><rect x="2.2" y="3" width="10.4" height="13" fill="#5073a8"/><path d="M2.2 3H12.6V16" fill="none" stroke="#89a5cf" stroke-width="0.8"/><text x="4.6" y="13.4" font-size="10" font-family="Liberation Sans,sans-serif" font-weight="bold" fill="#b9cdea" letter-spacing="0">?</text></svg>
<svg style="left:1784px;top:158px;" width="13" height="14" viewBox="0 0 13 14"><path d="M0 3H9.4M0 11H12.4" stroke="#2e2e2e" stroke-width="1.5"/><rect x="9.4" y="0" width="2.8" height="6.4" fill="#2e2e2e"/><rect x="4.4" y="7.8" width="3.6" height="6.2" fill="#2e2e2e"/></svg>
<svg style="left:1804px;top:157px;" width="17" height="14" viewBox="0 0 17 14"><g fill="#2e2e2e"><circle cx="6.5" cy="6.5" r="4.4"/><rect x="5.3" y="0" width="2.4" height="3" transform="rotate(0 6.5 6.5)"/><rect x="5.3" y="0" width="2.4" height="3" transform="rotate(45 6.5 6.5)"/><rect x="5.3" y="0" width="2.4" height="3" transform="rotate(90 6.5 6.5)"/><rect x="5.3" y="0" width="2.4" height="3" transform="rotate(135 6.5 6.5)"/><rect x="5.3" y="0" width="2.4" height="3" transform="rotate(180 6.5 6.5)"/><rect x="5.3" y="0" width="2.4" height="3" transform="rotate(225 6.5 6.5)"/><rect x="5.3" y="0" width="2.4" height="3" transform="rotate(270 6.5 6.5)"/><rect x="5.3" y="0" width="2.4" height="3" transform="rotate(315 6.5 6.5)"/></g><circle cx="6.5" cy="6.5" r="1.9" fill="#a8a8a8"/><path d="M12.5 9.5H17L14.75 13Z" fill="#2e2e2e"/></svg>
<div class="t " style="left:1397px;top:177.6px;font-size:11px;letter-spacing:0.322px;">center</div>
<div class="t" style="left:1346px;top:216px;width:60px;text-align:center;font-size:11.5px;transform:rotate(-90deg)">middle</div>
<div class="a" style="left:1385px;top:195px;width:61px;height:61px;border:1px solid #7a7a7a;background:#a8a8a8"></div>
<div class="a" style="left:1394px;top:203px;width:44px;height:44px;border:1px solid #7e7e7e;border-right:2px solid #8a8a8a"></div>
<div class="a" style="left:1395px;top:225px;width:42px;height:1px;background:#d23c3c"></div>
<div class="a" style="left:1415px;top:204px;width:1px;height:42px;background:#d23c3c"></div>
<div class="a" style="left:1405px;top:215px;width:21px;height:21px;border:1px solid #222;border-right-width:2px"></div>
<div class="a" style="left:1413px;top:223px;width:4px;height:4px;background:#a06a10"></div>
<div class="t " style="left:1540px;top:176.1px;letter-spacing:1.049px;">Pos X</div>
<div class="t " style="left:1634px;top:176.1px;letter-spacing:1.140px;">Pos Y</div>
<div class="t " style="left:1729px;top:176.1px;letter-spacing:0.974px;">Pos Z</div>
<div class="f" style="left:1538px;top:196px;width:92px;height:19px;">0</div>
<div class="f" style="left:1632px;top:196px;width:92px;height:19px;letter-spacing:1.265px;">-850</div>
<div class="f" style="left:1727px;top:196px;width:92px;height:19px;">0</div>
<div class="t " style="left:1540.5px;top:215.6px;letter-spacing:0.961px;">Width</div>
<div class="t " style="left:1634px;top:215.6px;letter-spacing:0.505px;">Height</div>
<div class="f" style="left:1538px;top:236px;width:92px;height:19px;letter-spacing:0.672px;">1000</div>
<div class="f" style="left:1632px;top:236px;width:92px;height:19px;letter-spacing:0.643px;">500</div>
<div class="btn" style="left:1755px;top:234px;width:33px;height:21px;border-radius:4px 0 0 4px"></div>
<div class="btn" style="left:1787px;top:234px;width:32px;height:21px;border-radius:0 4px 4px 0"></div>
<svg style="left:1764px;top:239px;" width="12" height="11" viewBox="0 0 12 11"><rect x="0.5" y="0.5" width="11" height="10" fill="none" stroke="#333" stroke-width="1.2" stroke-dasharray="2 1.6"/></svg>
<div class="t " style="left:1797px;top:235.1px;font-size:12px;color:#333">R</div>
<svg style="left:1372px;top:263.0px;" width="10" height="9" viewBox="0 0 10 9"><path d="M0 0H10L5 9Z" fill="#5a5a5a"/></svg>
<div class="t " style="left:1385px;top:257.6px;letter-spacing:0.935px;">Anchors</div>
<div class="t " style="left:1403px;top:277.6px;letter-spacing:0.116px;">Min</div>
<div class="t " style="left:1541px;top:277.6px;">X</div>
<div class="f" style="left:1554px;top:278px;width:76px;height:19px;">0.5</div>
<div class="t " style="left:1635px;top:277.6px;">Y</div>
<div class="f" style="left:1649px;top:278px;width:75px;height:19px;">0.5</div>
<div class="t " style="left:1403px;top:297.6px;letter-spacing:0.612px;">Max</div>
<div class="t " style="left:1541px;top:297.6px;">X</div>
<div class="f" style="left:1554px;top:298px;width:76px;height:19px;">0.5</div>
<div class="t " style="left:1635px;top:297.6px;">Y</div>
<div class="f" style="left:1649px;top:298px;width:75px;height:19px;">0.5</div>
<div class="t " style="left:1385px;top:320.6px;letter-spacing:0.626px;">Pivot</div>
<div class="t " style="left:1541px;top:320.6px;">X</div>
<div class="f" style="left:1554px;top:321px;width:76px;height:19px;">0.5</div>
<div class="t " style="left:1635px;top:320.6px;">Y</div>
<div class="f" style="left:1649px;top:321px;width:75px;height:19px;">0.5</div>
<div class="t " style="left:1385px;top:352.6px;letter-spacing:0.793px;">Rotation</div>
<div class="t " style="left:1541px;top:352.6px;">X</div>
<div class="f" style="left:1554px;top:353px;width:76px;height:19px;">0</div>
<div class="t " style="left:1635px;top:352.6px;">Y</div>
<div class="f" style="left:1649px;top:353px;width:75px;height:19px;">0</div>
<div class="t " style="left:1729.5px;top:352.6px;">Z</div>
<div class="f" style="left:1743px;top:353px;width:76px;height:19px;">0</div>
<div class="t " style="left:1385px;top:375.6px;letter-spacing:0.281px;">Scale</div>
<div class="t " style="left:1541px;top:375.6px;">X</div>
<div class="f" style="left:1554px;top:376px;width:76px;height:19px;">1</div>
<div class="t " style="left:1635px;top:375.6px;">Y</div>
<div class="f" style="left:1649px;top:376px;width:75px;height:19px;">1</div>
<div class="t " style="left:1729.5px;top:375.6px;">Z</div>
<div class="f" style="left:1743px;top:376px;width:76px;height:19px;">1</div>
<div class="sep" style="left:1367px;top:401px;width:459px"></div>
<svg style="left:1372px;top:409.0px;" width="10" height="9" viewBox="0 0 10 9"><path d="M0 0H10L5 9Z" fill="#5a5a5a"/></svg>
<svg style="left:1385px;top:405px;" width="20" height="17" viewBox="0 0 20 17"><ellipse cx="10" cy="8.5" rx="9.3" ry="6.6" fill="none" stroke="#8c8c8c" stroke-width="1.2"/><circle cx="10" cy="8.5" r="4.6" fill="none" stroke="#8c8c8c" stroke-width="1.4"/><circle cx="10" cy="8.5" r="2" fill="#8c8c8c"/></svg>
<div class="t b" style="left:1427.5px;top:404.1px;letter-spacing:0.563px;">Canvas Renderer</div>
<svg style="left:1758.6px;top:404px;" width="16" height="18" viewBox="0 0 16 18"><path d="M0.6 2.2L2.6 0.6H15V14.6L13 17.4H0.6Z" fill="#38588c" stroke="#2a4470" stroke-width="1"/><rect x="2.2" y="3" width="10.4" height="13" fill="#5073a8"/><path d="M2.2 3H12.6V16" fill="none" stroke="#89a5cf" stroke-width="0.8"/><text x="4.6" y="13.4" font-size="10" font-family="Liberation Sans,sans-serif" font-weight="bold" fill="#b9cdea" letter-spacing="0">?</text></svg>
<svg style="left:1784px;top:406px;" width="13" height="14" viewBox="0 0 13 14"><path d="M0 3H9.4M0 11H12.4" stroke="#2e2e2e" stroke-width="1.5"/><rect x="9.4" y="0" width="2.8" height="6.4" fill="#2e2e2e"/><rect x="4.4" y="7.8" width="3.6" height="6.2" fill="#2e2e2e"/></svg>
<svg style="left:1804px;top:405px;" width="17" height="14" viewBox="0 0 17 14"><g fill="#2e2e2e"><circle cx="6.5" cy="6.5" r="4.4"/><rect x="5.3" y="0" width="2.4" height="3" transform="rotate(0 6.5 6.5)"/><rect x="5.3" y="0" width="2.4" height="3" transform="rotate(45 6.5 6.5)"/><rect x="5.3" y="0" width="2.4" height="3" transform="rotate(90 6.5 6.5)"/><rect x="5.3" y="0" width="2.4" height="3" transform="rotate(135 6.5 6.5)"/><rect x="5.3" y="0" width="2.4" height="3" transform="rotate(180 6.5 6.5)"/><rect x="5.3" y="0" width="2.4" height="3" transform="rotate(225 6.5 6.5)"/><rect x="5.3" y="0" width="2.4" height="3" transform="rotate(270 6.5 6.5)"/><rect x="5.3" y="0" width="2.4" height="3" transform="rotate(315 6.5 6.5)"/></g><circle cx="6.5" cy="6.5" r="1.9" fill="#a8a8a8"/><path d="M12.5 9.5H17L14.75 13Z" fill="#2e2e2e"/></svg>
<div class="t" style="left:1385px;top:424px;width:152px;overflow:hidden;letter-spacing:0.580px;">Cull Transparent Mesh</div>
<div class="a" style="left:1541px;top:428px;width:15px;height:15px;border:1px solid #6b6b6b;border-radius:3px;background:linear-gradient(#d8d8d8,#b8b8b8)"></div>
<div class="sep" style="left:1367px;top:450px;width:459px"></div>
<svg style="left:1372px;top:458.5px;" width="10" height="9" viewBox="0 0 10 9"><path d="M0 0H10L5 9Z" fill="#5a5a5a"/></svg>
<svg style="left:1386px;top:454px;" width="18" height="18" viewBox="0 0 18 18"><rect x="0.5" y="0.5" width="17" height="17" fill="#caa77a" stroke="#d48a20" stroke-width="1"/><rect x="1" y="1" width="8" height="8" fill="#e8d8c0"/><rect x="9" y="9" width="8" height="8" fill="#3a3a3a"/><rect x="9" y="1" width="8" height="8" fill="#8a7050"/><circle cx="9" cy="9" r="3.5" fill="none" stroke="#e8a030" stroke-width="1.6"/></svg>
<div class="a" style="left:1409px;top:455px;width:15px;height:15px;border:1px solid #6b6b6b;border-radius:3px;background:linear-gradient(#d8d8d8,#b8b8b8)"></div>
<svg style="left:1410px;top:454px;" width="15" height="15" viewBox="0 0 15 15"><path d="M2.5 7.5L6 12L13 1.5" fill="none" stroke="#111" stroke-width="2.4"/></svg>
<div class="t b" style="left:1427.5px;top:453.6px;letter-spacing:0.804px;">Image (Script)</div>
<svg style="left:1758.6px;top:453px;" width="16" height="18" viewBox="0 0 16 18"><path d="M0.6 2.2L2.6 0.6H15V14.6L13 17.4H0.6Z" fill="#38588c" stroke="#2a4470" stroke-width="1"/><rect x="2.2" y="3" width="10.4" height="13" fill="#5073a8"/><path d="M2.2 3H12.6V16" fill="none" stroke="#89a5cf" stroke-width="0.8"/><text x="4.6" y="13.4" font-size="10" font-family="Liberation Sans,sans-serif" font-weight="bold" fill="#b9cdea" letter-spacing="0">?</text></svg>
<svg style="left:1784px;top:455px;" width="13" height="14" viewBox="0 0 13 14"><path d="M0 3H9.4M0 11H12.4" stroke="#2e2e2e" stroke-width="1.5"/><rect x="9.4" y="0" width="2.8" height="6.4" fill="#2e2e2e"/><rect x="4.4" y="7.8" width="3.6" height="6.2" fill="#2e2e2e"/></svg>
<svg style="left:1804px;top:454px;" width="17" height="14" viewBox="0 0 17 14"><g fill="#2e2e2e"><circle cx="6.5" cy="6.5" r="4.4"/><rect x="5.3" y="0" width="2.4" height="3" transform="rotate(0 6.5 6.5)"/><rect x="5.3" y="0" width="2.4" height="3" transform="rotate(45 6.5 6.5)"/><rect x="5.3" y="0" width="2.4" height="3" transform="rotate(90 6.5 6.5)"/><rect x="5.3" y="0" width="2.4" height="3" transform="rotate(135 6.5 6.5)"/><rect x="5.3" y="0" width="2.4" height="3" transform="rotate(180 6.5 6.5)"/><rect x="5.3" y="0" width="2.4" height="3" transform="rotate(225 6.5 6.5)"/><rect x="5.3" y="0" width="2.4" height="3" transform="rotate(270 6.5 6.5)"/><rect x="5.3" y="0" width="2.4" height="3" transform="rotate(315 6.5 6.5)"/></g><circle cx="6.5" cy="6.5" r="1.9" fill="#a8a8a8"/><path d="M12.5 9.5H17L14.75 13Z" fill="#2e2e2e"/></svg>
<div class="t " style="left:1385px;top:472.6px;letter-spacing:0.674px;">Source Image</div>
<div class="f" style="left:1539px;top:473px;width:258px;height:19px;letter-spacing:0.638px;">None (Sprite)</div>
<svg style="left:1806px;top:477px;opacity:1" width="10" height="10" viewBox="0 0 10 10"><circle cx="5" cy="5" r="4.2" fill="none" stroke="#2e2e2e" stroke-width="1.1"/><circle cx="5" cy="5" r="1.2" fill="#2e2e2e"/></svg>
<div class="t " style="left:1385px;top:495.6px;letter-spacing:0.890px;">Color</div>
<div class="a" style="left:1539px;top:497px;width:257px;height:18px;border:1px solid #6a6a6a;background:#e4e4e4;box-shadow:inset 0 -3px 0 #fff,inset 0 1px 0 #fff"></div>
<svg style="left:1801px;top:496px;" width="18" height="20" viewBox="0 0 18 20"><path d="M2 18L3 14.5L10.5 7L13 9.5L5.5 17Z" fill="#d0d0d0" stroke="#222" stroke-width="1.1"/><path d="M9.5 5L15 10.5" stroke="#222" stroke-width="2"/><path d="M11.5 6.5L14.5 2Q16 0.8 17.2 2Q18.2 3.4 17 4.8L13.5 8.5Z" fill="#222"/></svg>
<div class="t " style="left:1385px;top:518.1px;letter-spacing:0.070px;">Material</div>
<div class="f" style="left:1539px;top:518px;width:258px;height:20px;letter-spacing:0.307px;">None (Material)</div>
<svg style="left:1806px;top:522.5px;opacity:1" width="10" height="10" viewBox="0 0 10 10"><circle cx="5" cy="5" r="4.2" fill="none" stroke="#2e2e2e" stroke-width="1.1"/><circle cx="5" cy="5" r="1.2" fill="#2e2e2e"/></svg>
<div class="t " style="left:1385px;top:540.6px;letter-spacing:0.661px;">Raycast Target</div>
<div class="a" style="left:1541px;top:544px;width:15px;height:15px;border:1px solid #6b6b6b;border-radius:3px;background:linear-gradient(#d8d8d8,#b8b8b8)"></div>
<svg style="left:1542px;top:543px;" width="15" height="15" viewBox="0 0 15 15"><path d="M2.5 7.5L6 12L13 1.5" fill="none" stroke="#111" stroke-width="2.4"/></svg>
<div class="sep" style="left:1367px;top:566px;width:459px"></div>
<svg style="left:1372px;top:574.5px;" width="10" height="9" viewBox="0 0 10 9"><path d="M0 0H10L5 9Z" fill="#5a5a5a"/></svg>
<svg style="left:1388px;top:571px;opacity:1" width="14.0" height="16.0" viewBox="0 0 14 16"><path d="M0.5 0.5H9.5L13.5 4.5V15.5H0.5Z" fill="#e4e6ea" stroke="#8c8c8c" stroke-width="1"/><path d="M9.5 0.5V4.5H13.5" fill="#c8c8c8" stroke="#8c8c8c" stroke-width="1"/><text x="2" y="12.5" font-family="Liberation Sans,sans-serif" font-weight="bold" font-size="7" letter-spacing="0" fill="#3b6fc4">C#</text></svg>
<div class="a" style="left:1409px;top:571px;width:15px;height:15px;border:1px solid #6b6b6b;border-radius:3px;background:linear-gradient(#d8d8d8,#b8b8b8)"></div>
<svg style="left:1410px;top:570px;" width="15" height="15" viewBox="0 0 15 15"><path d="M2.5 7.5L6 12L13 1.5" fill="none" stroke="#111" stroke-width="2.4"/></svg>
<div class="t b" style="left:1427.5px;top:569.1px;letter-spacing:0.494px;">Dialogue Trigger (Script)</div>
<svg style="left:1758.6px;top:569px;" width="16" height="18" viewBox="0 0 16 18"><path d="M0.6 2.2L2.6 0.6H15V14.6L13 17.4H0.6Z" fill="#38588c" stroke="#2a4470" stroke-width="1"/><rect x="2.2" y="3" width="10.4" height="13" fill="#5073a8"/><path d="M2.2 3H12.6V16" fill="none" stroke="#89a5cf" stroke-width="0.8"/><text x="4.6" y="13.4" font-size="10" font-family="Liberation Sans,sans-serif" font-weight="bold" fill="#b9cdea" letter-spacing="0">?</text></svg>
<svg style="left:1784px;top:571px;" width="13" height="14" viewBox="0 0 13 14"><path d="M0 3H9.4M0 11H12.4" stroke="#2e2e2e" stroke-width="1.5"/><rect x="9.4" y="0" width="2.8" height="6.4" fill="#2e2e2e"/><rect x="4.4" y="7.8" width="3.6" height="6.2" fill="#2e2e2e"/></svg>
<svg style="left:1804px;top:570px;" width="17" height="14" viewBox="0 0 17 14"><g fill="#2e2e2e"><circle cx="6.5" cy="6.5" r="4.4"/><rect x="5.3" y="0" width="2.4" height="3" transform="rotate(0 6.5 6.5)"/><rect x="5.3" y="0" width="2.4" height="3" transform="rotate(45 6.5 6.5)"/><rect x="5.3" y="0" width="2.4" height="3" transform="rotate(90 6.5 6.5)"/><rect x="5.3" y="0" width="2.4" height="3" transform="rotate(135 6.5 6.5)"/><rect x="5.3" y="0" width="2.4" height="3" transform="rotate(180 6.5 6.5)"/><rect x="5.3" y="0" width="2.4" height="3" transform="rotate(225 6.5 6.5)"/><rect x="5.3" y="0" width="2.4" height="3" transform="rotate(270 6.5 6.5)"/><rect x="5.3" y="0" width="2.4" height="3" transform="rotate(315 6.5 6.5)"/></g><circle cx="6.5" cy="6.5" r="1.9" fill="#a8a8a8"/><path d="M12.5 9.5H17L14.75 13Z" fill="#2e2e2e"/></svg>
<div class="t " style="left:1385px;top:590.1px;color:#5f5f5f;letter-spacing:0.819px;">Script</div>
<div class="f" style="left:1539px;top:591px;width:258px;height:19px;"><span style="margin-left:15px;color:#5f5f5f;letter-spacing:0.429px;">DialogueTrigger</span></div>
<svg style="left:1544px;top:593px;opacity:0.55" width="11.9" height="13.6" viewBox="0 0 14 16"><path d="M0.5 0.5H9.5L13.5 4.5V15.5H0.5Z" fill="#e4e6ea" stroke="#8c8c8c" stroke-width="1"/><path d="M9.5 0.5V4.5H13.5" fill="#c8c8c8" stroke="#8c8c8c" stroke-width="1"/><text x="2" y="12.5" font-family="Liberation Sans,sans-serif" font-weight="bold" font-size="7" letter-spacing="0" fill="#3b6fc4">C#</text></svg>
<svg style="left:1806px;top:595px;opacity:0.6" width="10" height="10" viewBox="0 0 10 10"><circle cx="5" cy="5" r="4.2" fill="none" stroke="#2e2e2e" stroke-width="1.1"/><circle cx="5" cy="5" r="1.2" fill="#2e2e2e"/></svg>
<svg style="left:1372px;top:617.0px;" width="10" height="9" viewBox="0 0 10 9"><path d="M0 0H10L5 9Z" fill="#5a5a5a"/></svg>
<div class="t " style="left:1385px;top:611.6px;letter-spacing:0.408px;">Dialogue</div>
<div class="t " style="left:1403px;top:634.6px;letter-spacing:0.249px;">Name</div>
<div class="f" style="left:1539px;top:635px;width:280px;height:19px;letter-spacing:0.389px;">Val/entina</div>
<svg style="left:1389px;top:661.5px;" width="10" height="9" viewBox="0 0 10 9"><path d="M0 0H10L5 9Z" fill="#5a5a5a"/></svg>
<div class="t " style="left:1403px;top:656.6px;letter-spacing:0.682px;">Sentences</div>
<div class="t " style="left:1421px;top:679.6px;letter-spacing:0.905px;">Size</div>
<div class="f" style="left:1539px;top:680px;width:280px;height:19px;">3</div>
<div class="t " style="left:1421px;top:701.6px;letter-spacing:0.447px;">Element 0</div>
<div class="f" style="left:1420px;top:722px;width:399px;height:52px;white-space:pre;line-height:16px;font-size:13px;padding:0.7px 0 0 3px"><div style="letter-spacing:0.461px;">Hello, my name is Valentina and I'll be your test pilot</div><div style="letter-spacing:0.649px;">today...</div></div>
<div class="t " style="left:1421px;top:776.6px;letter-spacing:0.447px;">Element 1</div>
<div class="f" style="left:1420px;top:797px;width:399px;height:52px;white-space:pre;line-height:16px;font-size:13px;padding:0.7px 0 0 3px"><div style="letter-spacing:0.478px;">This is an example of what dialogue text could look like</div><div style="letter-spacing:0.631px;">in-game...</div></div>
<div class="t " style="left:1421px;top:851.6px;letter-spacing:0.447px;">Element 2</div>
<div class="f" style="left:1420px;top:872px;width:399px;height:52px;white-space:pre;line-height:16px;font-size:13px;padding:0.7px 0 0 3px"><div style="letter-spacing:0.517px;">See you in the verse!</div></div>
<div class="t " style="left:1385px;top:927.1px;letter-spacing:0.721px;">Name Box</div>
<div class="f" style="left:1539px;top:928px;width:258px;height:19px;"><span style="margin-left:15px;letter-spacing:0.673px;">Name (TextMeshProUGUI)</span></div>
<svg style="left:1544px;top:930.4px;opacity:1" width="11.9" height="13.6" viewBox="0 0 14 16"><path d="M0.5 0.5H9.5L13.5 4.5V15.5H0.5Z" fill="#e4e6ea" stroke="#8c8c8c" stroke-width="1"/><path d="M9.5 0.5V4.5H13.5" fill="#c8c8c8" stroke="#8c8c8c" stroke-width="1"/><text x="2" y="12.5" font-family="Liberation Sans,sans-serif" font-weight="bold" font-size="7" letter-spacing="0" fill="#3b6fc4">C#</text></svg>
<svg style="left:1806px;top:932px;opacity:1" width="10" height="10" viewBox="0 0 10 10"><circle cx="5" cy="5" r="4.2" fill="none" stroke="#2e2e2e" stroke-width="1.1"/><circle cx="5" cy="5" r="1.2" fill="#2e2e2e"/></svg>
<div class="t " style="left:1385px;top:949.6px;letter-spacing:0.572px;">Dial Box</div>
<div class="f" style="left:1539px;top:950px;width:258px;height:19px;"><span style="margin-left:15px;letter-spacing:0.630px;">Dialogue (TextMeshProUGUI)</span></div>
<svg style="left:1544px;top:952.4px;opacity:1" width="11.9" height="13.6" viewBox="0 0 14 16"><path d="M0.5 0.5H9.5L13.5 4.5V15.5H0.5Z" fill="#e4e6ea" stroke="#8c8c8c" stroke-width="1"/><path d="M9.5 0.5V4.5H13.5" fill="#c8c8c8" stroke="#8c8c8c" stroke-width="1"/><text x="2" y="12.5" font-family="Liberation Sans,sans-serif" font-weight="bold" font-size="7" letter-spacing="0" fill="#3b6fc4">C#</text></svg>
<svg style="left:1806px;top:954px;opacity:1" width="10" height="10" viewBox="0 0 10 10"><circle cx="5" cy="5" r="4.2" fill="none" stroke="#2e2e2e" stroke-width="1.1"/><circle cx="5" cy="5" r="1.2" fill="#2e2e2e"/></svg>
<div class="a" style="left:1366px;top:980px;width:460px;height:54px;background:#b4b4b4;border-top:1px solid #707070"></div>
<div class="a" style="left:1385px;top:987px;width:40px;height:40px;background:#fff"></div>
<div class="a" style="left:1390px;top:992px;width:30px;height:30px;background:#cfcfcf"></div>
<svg style="left:1372px;top:1018px;" width="9" height="11" viewBox="0 0 9 11"><path d="M0.5 0V11L9 5.5Z" fill="#5a5a5a"/></svg>
<div class="t " style="left:1435px;top:988.1px;font-size:13px;letter-spacing:0.804px;">Default UI Material</div>
<div class="t " style="left:1435px;top:1010.6px;color:#5a5a5a;font-size:13px;letter-spacing:0.830px;">Shader</div>
<div class="dd" style="left:1495px;top:1012px;width:320px;height:18px;color:#555;opacity:.85;letter-spacing:0.637px;">UI/Default</div>
<svg style="left:1801px;top:1019px;" width="7" height="4" viewBox="0 0 7 4"><path d="M0 0H7L3.5 4Z" fill="#555"/></svg>
<svg style="left:1778.6px;top:987.6px;" width="16" height="18" viewBox="0 0 16 18"><path d="M0.6 2.2L2.6 0.6H15V14.6L13 17.4H0.6Z" fill="#38588c" stroke="#2a4470" stroke-width="1"/><rect x="2.2" y="3" width="10.4" height="13" fill="#5073a8"/><path d="M2.2 3H12.6V16" fill="none" stroke="#89a5cf" stroke-width="0.8"/><text x="4.6" y="13.4" font-size="10" font-family="Liberation Sans,sans-serif" font-weight="bold" fill="#b9cdea" letter-spacing="0">?</text></svg>
<svg style="left:1803px;top:988px;" width="17" height="14" viewBox="0 0 17 14"><g fill="#2e2e2e"><circle cx="6.5" cy="6.5" r="4.4"/><rect x="5.3" y="0" width="2.4" height="3" transform="rotate(0 6.5 6.5)"/><rect x="5.3" y="0" width="2.4" height="3" transform="rotate(45 6.5 6.5)"/><rect x="5.3" y="0" width="2.4" height="3" transform="rotate(90 6.5 6.5)"/><rect x="5.3" y="0" width="2.4" height="3" transform="rotate(135 6.5 6.5)"/><rect x="5.3" y="0" width="2.4" height="3" transform="rotate(180 6.5 6.5)"/><rect x="5.3" y="0" width="2.4" height="3" transform="rotate(225 6.5 6.5)"/><rect x="5.3" y="0" width="2.4" height="3" transform="rotate(270 6.5 6.5)"/><rect x="5.3" y="0" width="2.4" height="3" transform="rotate(315 6.5 6.5)"/></g><circle cx="6.5" cy="6.5" r="1.9" fill="#a8a8a8"/><path d="M12.5 9.5H17L14.75 13Z" fill="#2e2e2e"/></svg>
<div class="a" style="left:1825px;top:116px;width:17px;height:918px;background:linear-gradient(90deg,#9a9a9a,#b8b8b8 40%,#c4c4c4 60%,#a8a8a8);border-left:1px solid #8a8a8a"></div>
<svg style="left:1829px;top:122px;" width="9" height="7" viewBox="0 0 9 7"><path d="M0 7H9L4.5 0Z" fill="#333"/></svg>
<svg style="left:1829px;top:1019px;" width="9" height="7" viewBox="0 0 9 7"><path d="M0 0H9L4.5 7Z" fill="#333"/></svg>
<div class="a" style="left:1826px;top:137px;width:16px;height:874px;border-radius:8px;border:1px solid #8c8c8c;background:linear-gradient(90deg,#a4a4a4,#c6c6c6 45%,#cacaca 65%,#b0b0b0)"></div>
<div class="a" style="left:1826px;top:157px;width:16px;height:795px;border-radius:8px;border:1px solid #3e5273;background:linear-gradient(90deg,#8794aa,#6f82a0 35%,#566b8d 70%,#475c7e)"></div>
<div class="a" style="left:1367px;top:1033px;width:475px;height:20px;background:linear-gradient(#6a6a6a,#474747);border-top:1px solid #3a3a3a"></div>
<div class="t b" style="left:1376px;top:1034.1px;color:#d6d6d6;font-size:13px;letter-spacing:0.499px;">DialogueBox</div>
<svg style="left:1480px;top:1039px;" width="5" height="10" viewBox="0 0 5 10"><path d="M0 4H5L2.5 0.5Z M0 6H5L2.5 9.5Z" fill="#c8c8c8"/></svg>
<div class="a" style="left:1493px;top:1041px;width:340px;height:1px;background:#9a9a9a"></div>
<div class="a" style="left:1493px;top:1045px;width:340px;height:1px;background:#9a9a9a"></div>
</div>
</body></html>
